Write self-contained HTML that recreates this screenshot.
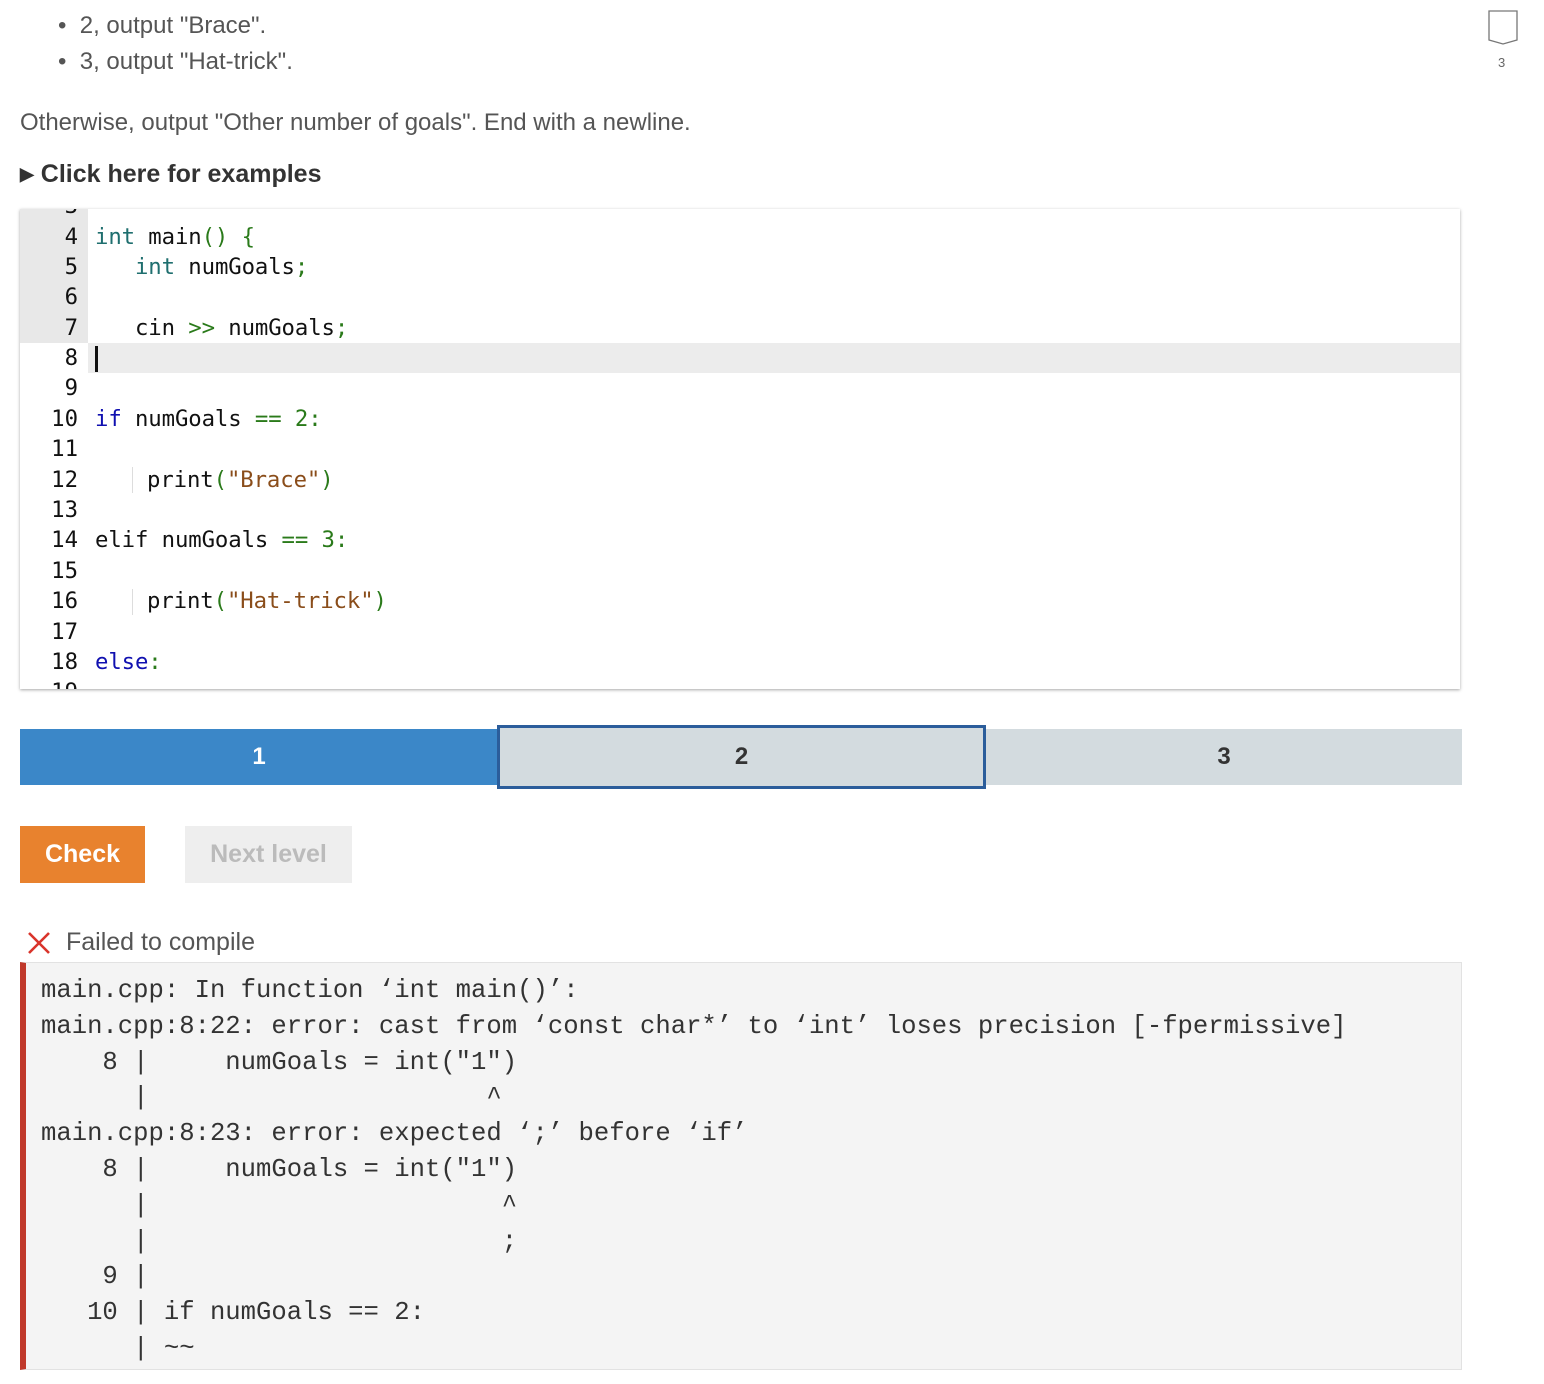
<!DOCTYPE html>
<html><head><meta charset="utf-8"><style>
body{margin:0;width:1544px;height:1384px;background:#fff;position:relative;overflow:hidden;font-family:"Liberation Sans",sans-serif;color:#444}
.a{position:absolute;white-space:pre}
.t{font-size:24px;color:#555}
.ed{position:absolute;left:20px;top:209px;width:1440px;height:480px;background:#fff;box-shadow:0 1px 3px rgba(0,0,0,.35);overflow:hidden}
.ln{position:absolute;left:0;width:68px;height:30.4px;text-align:right;padding-right:10px;box-sizing:border-box;font:22.3px/30.4px "DejaVu Sans Mono","Liberation Mono",monospace;color:#111}
.cd{position:absolute;left:75px;font:22.3px/30.4px "DejaVu Sans Mono","Liberation Mono",monospace;color:#111;white-space:pre;letter-spacing:-0.1px}
.k{color:#1f6f6f}.g{color:#2a7a1a}.b{color:#1010b0}.s{color:#8a4d1a}
.err{position:absolute;left:20px;top:962px;width:1442px;height:408px;background:#f4f4f4;border:1px solid #e2e2e2;border-left:6px solid #c0392b;box-sizing:border-box}
.err pre{margin:0;position:absolute;left:15px;top:10px;font:25.6px/35.8px "Liberation Mono",monospace;color:#333}
</style></head><body>
<div class="a t" style="left:58px;top:12px">•  2, output "Brace".</div>
<div class="a t" style="left:58px;top:48px">•  3, output "Hat-trick".</div>
<div class="a t" style="left:20px;top:109px">Otherwise, output "Other number of goals". End with a newline.</div>
<div class="a" style="left:20px;top:160px;font-size:25px;font-weight:bold;color:#333"><span style="font-size:18px;position:relative;top:-2px">▶</span> Click here for examples</div>
<svg class="a" style="left:1486px;top:10px" width="34" height="36"><path d="M3 1H31V30L17 34L3 30Z" fill="none" stroke="#777" stroke-width="1.3"/></svg>
<div class="a" style="left:1498px;top:55px;font-size:13px;color:#666">3</div>

<div class="ed">
<div style="position:absolute;left:0;top:0;width:68px;height:134px;background:#e8e8e8"></div>
<div style="position:absolute;left:68px;top:134px;right:0;height:30px;background:#ececec"></div>
<div style="position:absolute;left:75px;top:137px;width:3px;height:26px;background:#111"></div>
<div class="ln" style="top:-18px">3</div>
<div class="ln" style="top:13px">4</div><div class="ln" style="top:43px">5</div><div class="ln" style="top:73px">6</div><div class="ln" style="top:104px">7</div><div class="ln" style="top:134px">8</div><div class="ln" style="top:164px">9</div><div class="ln" style="top:195px">10</div><div class="ln" style="top:225px">11</div><div class="ln" style="top:256px">12</div><div class="ln" style="top:286px">13</div><div class="ln" style="top:316px">14</div><div class="ln" style="top:347px">15</div><div class="ln" style="top:377px">16</div><div class="ln" style="top:408px">17</div><div class="ln" style="top:438px">18</div><div class="ln" style="top:468px">19</div>
<div class="cd" style="top:13px"><span class="k">int</span> main<span class="g">()</span> <span class="g">{</span></div>
<div class="cd" style="top:43px">   <span class="k">int</span> numGoals<span class="g">;</span></div>
<div class="cd" style="top:104px">   cin <span class="g">&gt;&gt;</span> numGoals<span class="g">;</span></div>
<div class="cd" style="top:195px"><span class="b">if</span> numGoals <span class="g">==</span> <span class="g">2:</span></div>
<div style="position:absolute;left:112px;top:258px;width:1px;height:26px;background:#ddd"></div>
<div class="cd" style="top:256px;left:127px">print<span class="g">(</span><span class="s">"Brace"</span><span class="g">)</span></div>
<div class="cd" style="top:316px">elif numGoals <span class="g">==</span> <span class="g">3:</span></div>
<div style="position:absolute;left:112px;top:380px;width:1px;height:26px;background:#ddd"></div>
<div class="cd" style="top:377px;left:127px">print<span class="g">(</span><span class="s">"Hat-trick"</span><span class="g">)</span></div>
<div class="cd" style="top:438px"><span class="b">else</span><span class="g">:</span></div>
</div>

<div class="a" style="left:20px;top:729px;width:478px;height:56px;background:#3b87c8;color:#fff;font:bold 24px/56px 'Liberation Sans';text-align:center">1</div>
<div class="a" style="left:986px;top:729px;width:476px;height:56px;background:#d3dbdf;color:#333;font:bold 24px/56px 'Liberation Sans';text-align:center">3</div>
<div class="a" style="left:497px;top:725px;width:489px;height:64px;box-sizing:border-box;border:3px solid #2b5d9b;background:#d3dbdf;color:#333;font:bold 24px/58px 'Liberation Sans';text-align:center">2</div>

<div class="a" style="left:20px;top:826px;width:125px;height:57px;background:#e8822e;color:#fff;font:bold 25px/57px 'Liberation Sans';text-align:center">Check</div>
<div class="a" style="left:185px;top:826px;width:167px;height:57px;background:#eeeeee;color:#bbb;font:bold 25px/57px 'Liberation Sans';text-align:center">Next level</div>

<svg class="a" style="left:27px;top:931px" width="24" height="24"><path d="M2 2L22 22M22 2L2 22" stroke="#d9342b" stroke-width="2.6"/></svg>
<div class="a t" style="left:66px;top:928px;font-size:25px">Failed to compile</div>

<div class="err"><pre>main.cpp: In function ‘int main()’:
main.cpp:8:22: error: cast from ‘const char*’ to ‘int’ loses precision [-fpermissive]
    8 |     numGoals = int("1")
      |                      ^
main.cpp:8:23: error: expected ‘;’ before ‘if’
    8 |     numGoals = int("1")
      |                       ^
      |                       ;
    9 |
   10 | if numGoals == 2:
      | ~~</pre></div>
</body></html>
